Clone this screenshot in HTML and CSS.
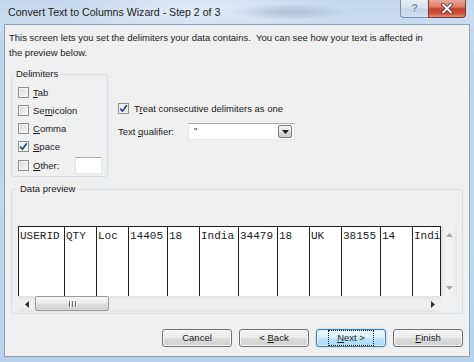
FILE: index.html
```
<!DOCTYPE html>
<html>
<head>
<meta charset="utf-8">
<link rel="stylesheet" href="styles.css">
</head>
<body>
<div class="window">
  <div class="titlebar">
    <span class="title">Convert Text to Columns Wizard - Step 2 of 3</span>
    <div class="caption">
      <span class="cap-help">?</span>
      <span class="cap-close"><svg width="14" height="11" viewBox="0 0 14 11"><path d="M3 1.5 L11 9.5 M11 1.5 L3 9.5" stroke="#5a2a26" stroke-width="3.6" stroke-linecap="round"/><path d="M3 1.5 L11 9.5 M11 1.5 L3 9.5" stroke="#ffffff" stroke-width="2" stroke-linecap="round"/></svg></span>
    </div>
  </div>
  <div class="client">
    <p class="desc">This screen lets you set the delimiters your data contains.&nbsp; You can see how your text is affected in<br>the preview below.</p>
    <div class="options">
      <fieldset class="group delims">
        <legend>Delimiters</legend>
        <div class="row"><span class="cb"></span><span><u>T</u>ab</span></div>
        <div class="row"><span class="cb"></span><span>Se<u>m</u>icolon</span></div>
        <div class="row"><span class="cb"></span><span><u>C</u>omma</span></div>
        <div class="row"><span class="cb checked"><svg width="9" height="9" viewBox="0 0 9 9"><path d="M1.2 4.6 L3.5 7.2 L7.8 1.2" fill="none" stroke="#21448f" stroke-width="1.7"/></svg></span><span><u>S</u>pace</span></div>
        <div class="row row-other"><span class="cb"></span><span class="other-label"><u>O</u>ther:</span><span class="textbox"></span></div>
      </fieldset>
      <div class="side">
        <div class="row treat"><span class="cb checked"><svg width="9" height="9" viewBox="0 0 9 9"><path d="M1.2 4.6 L3.5 7.2 L7.8 1.2" fill="none" stroke="#21448f" stroke-width="1.7"/></svg></span><span>T<u>r</u>eat consecutive delimiters as one</span></div>
        <div class="qual">
          <span class="qual-label">Text <u>q</u>ualifier:</span>
          <div class="combo"><span class="combo-val">"</span><span class="combo-btn"><svg width="7" height="4" viewBox="0 0 7 4"><path d="M0 0 H7 L3.5 4 Z" fill="#1e1e1e"/></svg></span></div>
        </div>
      </div>
    </div>
    <fieldset class="group preview">
      <legend>Data preview</legend>
      <div class="preview-area">
        <div class="grid-row">
          <div class="viewport">
            <div class="col w7">USERID</div>
            <div class="col w5">QTY</div>
            <div class="col w5">Loc</div>
            <div class="col w6">14405</div>
            <div class="col w5">18</div>
            <div class="col w6">India</div>
            <div class="col w6">34479</div>
            <div class="col w5">18</div>
            <div class="col w5">UK</div>
            <div class="col w6">38155</div>
            <div class="col w5">14</div>
            <div class="col last">India</div>
          </div>
          <div class="vscroll">
            <span class="sb-btn"><svg width="7" height="4" viewBox="0 0 7 4"><path d="M0 4 L3.5 0 L7 4 Z" fill="#a8a8a8"/></svg></span>
            <span class="sb-btn"><svg width="7" height="4" viewBox="0 0 7 4"><path d="M0 0 H7 L3.5 4 Z" fill="#a8a8a8"/></svg></span>
          </div>
        </div>
        <div class="hscroll-row">
          <div class="hscroll">
            <span class="sb-btn h"><svg width="4" height="7" viewBox="0 0 4 7"><path d="M4 0 V7 L0 3.5 Z" fill="#303030"/></svg></span>
            <span class="thumb"><span class="grip"></span><span class="grip"></span><span class="grip"></span></span>
            <span class="track"></span>
            <span class="sb-btn h"><svg width="4" height="7" viewBox="0 0 4 7"><path d="M0 0 V7 L4 3.5 Z" fill="#303030"/></svg></span>
          </div>
          <div class="corner"></div>
        </div>
      </div>
    </fieldset>
    <div class="buttons">
      <span class="btn"><span>Cancel</span></span>
      <span class="btn"><span>&lt; <u>B</u>ack</span></span>
      <span class="btn default"><span class="focus"><u>N</u>ext &gt;</span></span>
      <span class="btn"><span><u>F</u>inish</span></span>
    </div>
  </div>
</div>
</body>
</html>
```
FILE: styles.css
```
* { box-sizing: border-box; }
html, body { margin: 0; padding: 0; }
body {
  font-family: "Liberation Sans", Arial, sans-serif;
  font-size: 9.5px;
  color: #1a1a1a;
  width: 474px;
  height: 362px;
  overflow: hidden;
}
u { text-decoration: underline; text-underline-offset: 1px; }

.window {
  width: 474px;
  height: 362px;
  display: flex;
  flex-direction: column;
  background:
    radial-gradient(ellipse 60px 8px at 290px 12px, rgba(110,130,155,0.35), rgba(110,130,155,0) 100%),
    radial-gradient(ellipse 140px 30px at 200px 8px, rgba(235,243,251,0.7), rgba(235,243,251,0) 100%),
    linear-gradient(180deg, #c4d7ed 0px, #cadcef 20px, #bed3ea 60px, #c3d8ee 200px, #b9d0ea 362px);
}

.titlebar {
  height: 24px;
  display: flex;
  justify-content: space-between;
  align-items: flex-start;
}
.title {
  padding-left: 8px;
  line-height: 25px;
  font-size: 10.6px;
  color: #1c1c1c;
}
.caption {
  display: flex;
  margin-right: 8px;
}
.cap-help {
  width: 28px;
  height: 18px;
  border: 1px solid #7990ad;
  border-top: none;
  border-right: none;
  border-radius: 0 0 0 4px;
  background: linear-gradient(180deg, #e6eef7 0%, #d4e1ef 48%, #c2d4e8 52%, #d3e2f1 100%);
  color: #7a8aa0;
  font-size: 11px;
  font-weight: bold;
  text-align: center;
  line-height: 16px;
  text-shadow: 0 0 1px #ffffff;
}
.cap-close {
  width: 38px;
  height: 18px;
  border: 1px solid #7a3a33;
  border-top: none;
  border-radius: 0 0 4px 0;
  background: linear-gradient(180deg, #e9a898 0%, #dd7d6a 40%, #c6412f 52%, #d0533d 80%, #e2917c 100%);
  display: flex;
  align-items: center;
  justify-content: center;
}

.client {
  flex: 1;
  margin: 0 4px 5px 4px;
  border: 1px solid #8aa1bd;
  background: #f0f0f0;
  display: flex;
  flex-direction: column;
}

.desc {
  margin: 0;
  padding: 5px 0 0 4px;
  line-height: 15px;
}

.options {
  display: flex;
  margin: 7px 0 0 6px;
}

.group {
  margin: 0;
  border: 1px solid #d5dfe5;
  border-radius: 3px;
  min-width: 0;
}
.group legend {
  padding: 0 2px;
  line-height: 14px;
}

.delims {
  width: 97px;
  padding: 2px 0 1px 2px;
}
.row {
  display: flex;
  align-items: center;
  height: 18px;
  margin-left: 4px;
}
.row-other { height: 20px; }
.cb {
  width: 11px;
  height: 11px;
  flex: none;
  border: 1px solid #8e8f8f;
  background: linear-gradient(135deg, #d6d6d6 0%, #ececec 60%, #fbfbfb 100%);
  box-shadow: inset 0 0 0 1px #f3f3f3;
  margin-right: 4px;
  display: flex;
  align-items: center;
  justify-content: center;
}
.cb.checked {
  background: linear-gradient(135deg, #e6eef9 0%, #f3f7fc 60%, #ffffff 100%);
}
.other-label { width: 42px; }
.textbox {
  width: 27px;
  height: 17px;
  background: #ffffff;
  border: 1px solid #abadb3;
  border-color: #abadb3 #e3e9ef #e3e9ef #e2e3ea;
}

.side {
  margin-left: 10px;
  padding-top: 33px;
}
.side .row { margin-left: 0; height: 16px; }
.treat .cb { margin-right: 5px; }
.qual {
  display: flex;
  align-items: center;
  margin-top: 7px;
  height: 17px;
}
.qual-label { width: 70px; }
.combo {
  width: 107px;
  height: 17px;
  background: #ffffff;
  border: 1px solid #abadb3;
  border-color: #abadb3 #dbdfe6 #e3e9ef #e2e3ea;
  display: flex;
  align-items: center;
  justify-content: space-between;
  padding: 0 2px 0 5px;
}
.combo-val { line-height: 13px; padding-bottom: 2px; }
.combo-btn {
  width: 14px;
  height: 13px;
  border: 1px solid #7b7b7b;
  border-radius: 2px;
  background: linear-gradient(180deg, #f4f4f4 0%, #e6e6e6 48%, #d9d9d9 52%, #cfcfcf 100%);
  display: flex;
  align-items: center;
  justify-content: center;
}

.preview {
  margin: 5px 6px 0 6px;
  padding: 30px 5px 1px 6px;
}
.preview-area { display: flex; flex-direction: column; }
.grid-row { display: flex; height: 70px; }
.viewport {
  width: 423px;
  display: flex;
  overflow: hidden;
  border-top: 1px solid #202020;
  border-right: 1px solid #202020;
  background: #ffffff;
}
.col {
  flex: none;
  border-left: 1px solid #202020;
  font-family: "Liberation Mono", "Courier New", monospace;
  font-size: 11px;
  line-height: 13px;
  padding: 3px 0 0 1px;
  white-space: nowrap;
  overflow: hidden;
  color: #1a1a1a;
}
.w5 { width: 32px; }
.w6 { width: 39px; }
.w7 { width: 46px; }
.col.last { flex: 1; min-width: 0; }

.vscroll {
  width: 16px;
  display: flex;
  flex-direction: column;
  justify-content: space-between;
  background: linear-gradient(90deg, #e3e3e3 0%, #f2f2f2 30%, #f2f2f2 70%, #e8e8e8 100%);
}
.sb-btn {
  height: 17px;
  display: flex;
  align-items: center;
  justify-content: center;
}
.hscroll-row { display: flex; height: 16px; }
.hscroll {
  width: 423px;
  display: flex;
  background: linear-gradient(180deg, #e2e2e2 0%, #efefef 30%, #f0f0f0 70%, #e6e6e6 100%);
}
.sb-btn.h { width: 17px; height: 16px; }
.thumb {
  width: 74px;
  height: 15px;
  border: 1px solid #9a9a9a;
  border-radius: 2px;
  background: linear-gradient(180deg, #f6f6f6 0%, #ececec 45%, #dcdcdc 55%, #d4d4d4 100%);
  display: flex;
  align-items: center;
  justify-content: center;
  gap: 2px;
}
.grip {
  width: 1px;
  height: 6px;
  background: #6a6a6a;
  box-shadow: 1px 0 0 #ffffff;
}
.track { flex: 1; }
.corner { width: 16px; background: #f0f0f0; }

.buttons {
  display: flex;
  justify-content: flex-end;
  gap: 7px;
  margin: 15px 6px 0 0;
}
.btn {
  width: 70px;
  height: 18px;
  border: 1px solid #707070;
  border-radius: 3px;
  background: linear-gradient(180deg, #f2f2f2 0%, #ebebeb 48%, #dddddd 52%, #cfcfcf 100%);
  box-shadow: inset 0 0 0 1px #fbfbfb;
  display: flex;
  align-items: center;
  justify-content: center;
  line-height: 12px;
}
.btn.default {
  border-color: #3c7fb1;
  background: linear-gradient(180deg, #eaf6fd 0%, #d9f0fc 48%, #bee6fd 52%, #a7d9f5 100%);
  box-shadow: inset 0 0 0 1px #e4f3fb, 0 0 2px rgba(60,140,200,0.5);
}
.focus {
  padding: 1px 8px;
  border: 1px dotted #1c1c1c;
}
```
